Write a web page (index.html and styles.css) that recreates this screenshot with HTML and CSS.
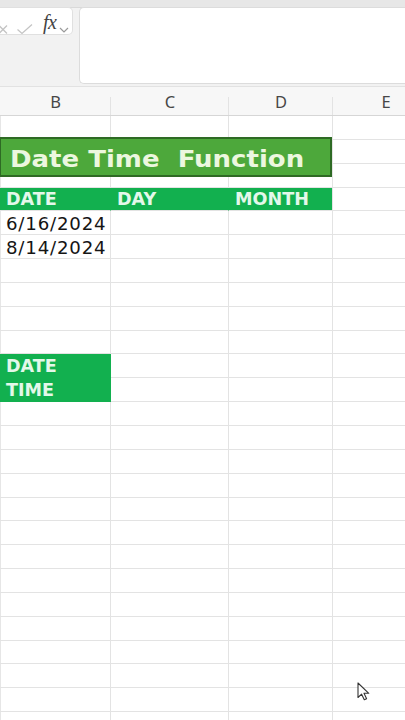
FILE: index.html
```html
<!DOCTYPE html>
<html>
<head>
<meta charset="utf-8">
<link rel="stylesheet" href="styles.css">
</head>
<body>
<div class="app">
  <div class="topstrip"></div>
  <div class="fbar">
    <div class="namebox">
      <svg class="ico-xcheck" width="36" height="28" viewBox="0 0 36 28">
        <path d="M-1 18.5 L7 26.5 M7 18.5 L-1 26.5" stroke="#c4c4c4" stroke-width="1.3" fill="none"/>
        <path d="M17.5 22.5 L22 26.5 L32 17.5" stroke="#c4c4c4" stroke-width="1.3" fill="none"/>
      </svg>
      <span class="fx">fx</span>
      <svg class="ico-chev" width="10" height="28" viewBox="0 0 10 28">
        <path d="M1 21 L5 25 L9 21" stroke="#9a9a9a" stroke-width="1.2" fill="none"/>
      </svg>
    </div>
    <div class="finput"></div>
  </div>
  <div class="colheads">
    <div class="ch">B</div>
    <div class="ch">C</div>
    <div class="ch">D</div>
    <div class="ch">E</div>
  </div>
  <div class="sheet">
    <!-- rows 1-3 -->
    <div class="c"></div><div class="c"></div><div class="c"></div><div class="c"></div>
    <div class="c"></div><div class="c"></div><div class="c"></div><div class="c"></div>
    <div class="c"></div><div class="c"></div><div class="c"></div><div class="c"></div>
    <!-- row 4 header -->
    <div class="c hd">DATE</div><div class="c hd">DAY</div><div class="c hd hd-last">MONTH</div><div class="c"></div>
    <!-- row 5 -->
    <div class="c val">6/16/2024</div><div class="c"></div><div class="c"></div><div class="c"></div>
    <!-- row 6 -->
    <div class="c val">8/14/2024</div><div class="c"></div><div class="c"></div><div class="c"></div>
    <!-- rows 7-10 -->
    <div class="c"></div><div class="c"></div><div class="c"></div><div class="c"></div>
    <div class="c"></div><div class="c"></div><div class="c"></div><div class="c"></div>
    <div class="c"></div><div class="c"></div><div class="c"></div><div class="c"></div>
    <div class="c"></div><div class="c"></div><div class="c"></div><div class="c"></div>
    <!-- rows 11-12 -->
    <div class="c hd dt">DATE<br>TIME</div><div class="c"></div><div class="c"></div><div class="c"></div>
    <div class="c"></div><div class="c"></div><div class="c"></div>
    <!-- rows 13-26 -->
    <div class="c"></div><div class="c"></div><div class="c"></div><div class="c"></div>
    <div class="c"></div><div class="c"></div><div class="c"></div><div class="c"></div>
    <div class="c"></div><div class="c"></div><div class="c"></div><div class="c"></div>
    <div class="c"></div><div class="c"></div><div class="c"></div><div class="c"></div>
    <div class="c"></div><div class="c"></div><div class="c"></div><div class="c"></div>
    <div class="c"></div><div class="c"></div><div class="c"></div><div class="c"></div>
    <div class="c"></div><div class="c"></div><div class="c"></div><div class="c"></div>
    <div class="c"></div><div class="c"></div><div class="c"></div><div class="c"></div>
    <div class="c"></div><div class="c"></div><div class="c"></div><div class="c"></div>
    <div class="c"></div><div class="c"></div><div class="c"></div><div class="c"></div>
    <div class="c"></div><div class="c"></div><div class="c"></div><div class="c"></div>
    <div class="c"></div><div class="c"></div><div class="c"></div><div class="c"></div>
    <div class="c"></div><div class="c"></div><div class="c"></div><div class="c"></div>
    <div class="c"></div><div class="c"></div><div class="c"></div><div class="c"></div>
  </div>
  <div class="title"><span class="title-text">Date Time&nbsp; Function</span></div>
  <svg class="cursor" width="14" height="19" viewBox="0 0 14 19">
    <path d="M1 1 L1 15.5 L4.6 12.2 L7.3 17.8 L9.6 16.8 L7 11.3 L11.8 11.3 Z" fill="#fff" stroke="#333" stroke-width="1.1" stroke-linejoin="round"/>
  </svg>
</div>
</body>
</html>
```

FILE: styles.css
```css
* { box-sizing: border-box; }
html, body { margin: 0; padding: 0; }
body {
  width: 405px;
  height: 720px;
  overflow: hidden;
  background: #ffffff;
  font-family: "DejaVu Sans", Verdana, sans-serif;
}
.app {
  position: relative;
  width: 405px;
  height: 720px;
  overflow: hidden;
}
.topstrip {
  height: 8px;
  background: #e7e7e7;
  border-bottom: 1px solid #d9d9d9;
}
.fbar {
  height: 78px;
  display: flex;
  gap: 6px;
  background: #f2f2f2;
}
.namebox {
  width: 73px;
  height: 28px;
  margin-top: -1px;
  background: #ffffff;
  border: 1px solid #e0e0e0;
  border-left: none;
  border-radius: 0 5px 5px 0;
  display: flex;
  align-items: flex-start;
}
.ico-xcheck { flex: none; margin-top: -1px; }
.fx {
  font-family: "Liberation Serif", "DejaVu Serif", serif;
  font-style: italic;
  font-size: 20px;
  color: #444444;
  margin-left: 7px;
  margin-top: 4px;
  line-height: 20px;
  letter-spacing: -0.5px;
}
.ico-chev { flex: none; margin-left: 3px; margin-top: -1px; }
.finput {
  flex: 1;
  height: 77px;
  margin-top: -1px;
  background: #ffffff;
  border: 1px solid #dcdcdc;
  border-right: none;
  border-radius: 5px 0 0 5px;
}
.colheads {
  height: 30px;
  display: grid;
  grid-template-columns: 111px 118px 104px 106px;
  background: #f7f7f7;
  border-top: 1px solid #e2e2e2;
  border-bottom: 1px solid #d6d6d6;
}
.ch {
  position: relative;
  display: flex;
  align-items: flex-end;
  justify-content: center;
  padding-bottom: 3px;
  font-family: "Noto Sans", "Open Sans", sans-serif;
  font-size: 16.5px;
  line-height: 20px;
  color: #474747;
}
.ch::after {
  content: "";
  position: absolute;
  right: 0;
  top: 10px;
  bottom: 0;
  width: 1px;
  background: #e3e3e3;
}
.sheet {
  display: grid;
  grid-template-columns: 111px 118px 104px 106px;
  grid-auto-rows: 23.85px;
  background: #ffffff;
  box-shadow: inset 1px 0 #e6e6e6;
}
.c {
  border-right: 1px solid #e3e3e3;
  border-bottom: 1px solid #e3e3e3;
  display: flex;
  align-items: center;
  padding-left: 6px;
  white-space: nowrap;
}
.hd {
  background: #12b04f;
  border-right-color: #12b04f;
  color: #e4f8ea;
  font-weight: bold;
  font-size: 17.6px;
  line-height: 23.85px;
  padding-top: 2px;
}
.hd-last { border-right-color: #e3e3e3; }
.dt {
  grid-row: span 2;
  display: block;
  border-bottom-color: #12b04f;
  padding-top: 0.5px;
}
.val {
  font-size: 18.2px;
  letter-spacing: 0.8px;
  color: #151515;
  padding-top: 1px;
}
.title {
  position: absolute;
  left: -1px;
  top: 137px;
  width: 333px;
  height: 40px;
  background: #4da83b;
  border: 2px solid #2e6a24;
  display: flex;
  align-items: center;
  padding-left: 9px;
  padding-top: 3px;
  overflow: hidden;
}
.title-text {
  display: inline-block;
  font-weight: bold;
  font-size: 23px;
  color: #ecf7df;
  white-space: nowrap;
  transform: scaleX(1.13);
  transform-origin: left center;
}
.cursor {
  position: absolute;
  left: 357px;
  top: 682px;
}
```
